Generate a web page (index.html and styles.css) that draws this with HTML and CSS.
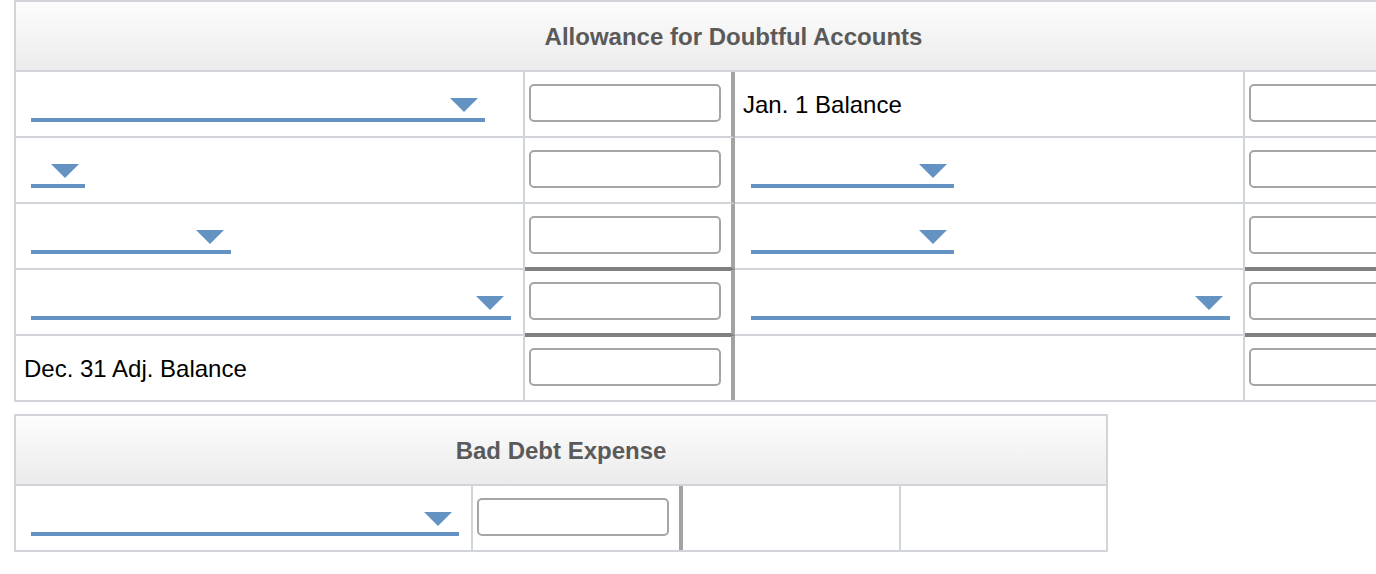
FILE: index.html
```html
<!DOCTYPE html>
<html lang="en">
<head>
<meta charset="utf-8">
<title>T-Accounts</title>
<link rel="stylesheet" href="styles.css">
</head>
<body>
<div class="acct acct-main">
  <div class="acct-head">Allowance for Doubtful Accounts</div>
  <div class="acct-body">
    <div class="cell"><div class="dd w454"></div></div>
    <div class="cell debit"><input class="amt" type="text"></div>
    <div class="cell label">Jan. 1 Balance</div>
    <div class="cell credit"><input class="amt" type="text"></div>

    <div class="cell"><div class="dd w54"></div></div>
    <div class="cell debit"><input class="amt" type="text"></div>
    <div class="cell cr-label"><div class="dd w203"></div></div>
    <div class="cell credit"><input class="amt" type="text"></div>

    <div class="cell"><div class="dd w200"></div></div>
    <div class="cell debit rule"><input class="amt" type="text"></div>
    <div class="cell cr-label"><div class="dd w203"></div></div>
    <div class="cell credit rule"><input class="amt" type="text"></div>

    <div class="cell"><div class="dd w480"></div></div>
    <div class="cell debit rule"><input class="amt" type="text"></div>
    <div class="cell cr-label"><div class="dd w479"></div></div>
    <div class="cell credit rule"><input class="amt" type="text"></div>

    <div class="cell label last">Dec. 31 Adj. Balance</div>
    <div class="cell debit last"><input class="amt" type="text"></div>
    <div class="cell last"></div>
    <div class="cell credit last"><input class="amt" type="text"></div>
  </div>
</div>

<div class="acct acct-bad">
  <div class="acct-head">Bad Debt Expense</div>
  <div class="acct-body">
    <div class="cell last"><div class="dd w428"></div></div>
    <div class="cell debit last"><input class="amt" type="text"></div>
    <div class="cell last"></div>
    <div class="cell credit last"></div>
  </div>
</div>
</body>
</html>
```
FILE: styles.css
```css
html, body {
  margin: 0;
  overflow: hidden;
  background: #ffffff;
}

body {
  padding: 0 0 0 14px;
  font-family: "Liberation Sans", Arial, Helvetica, sans-serif;
}

.acct {
  box-sizing: border-box;
  border: 2px solid #d1d5d9;
}

.acct-main {
  width: 1439px;
}

.acct-bad {
  width: 1094px;
  margin-top: 12px;
}

.acct-head {
  box-sizing: border-box;
  height: 70px;
  padding-top: 2px;
  border-bottom: 2px solid #d1d5d9;
  background: linear-gradient(to bottom, #fdfdfd, #ebebeb);
  display: flex;
  align-items: center;
  justify-content: center;
  font-weight: bold;
  font-size: 24px;
  color: #5a5a5a;
}

.acct-body {
  display: grid;
}

.acct-main .acct-body {
  grid-template-columns: 509px 210px 510px 206px;
  grid-template-rows: repeat(4, 66px) 64px;
}

.acct-bad .acct-body {
  grid-template-columns: 457px 210px 218px 205px;
  grid-template-rows: 64px;
}

.cell {
  box-sizing: border-box;
  min-width: 0;
  display: flex;
  align-items: flex-start;
  border-right: 2px solid #d1d5d9;
  border-bottom: 2px solid #d1d5d9;
}

.cell.debit {
  border-right: 4px solid #a3a3a3;
}

.cell.credit {
  border-right: 0;
}

.cell.rule {
  border-bottom: 3px solid #808080;
  box-shadow: 0 1px 0 #808080;
}

.cell.last {
  border-bottom: 0;
}

.cell.label {
  align-items: center;
  padding-left: 8px;
  padding-top: 2px;
  font-size: 24px;
  color: #000000;
  white-space: nowrap;
}

.dd {
  box-sizing: border-box;
  margin-left: 15px;
  height: 50px;
  border-bottom: 4px solid #6392c3;
  display: flex;
  justify-content: flex-end;
  align-items: flex-end;
  padding: 0 7px 6px 0;
}

.dd::after {
  content: "";
  width: 0;
  height: 0;
  border-left: 14px solid transparent;
  border-right: 14px solid transparent;
  border-top: 14px solid #6392c3;
}

.cr-label .dd {
  margin-left: 16px;
}

.w54 { width: 54px; padding-right: 6px; }
.w200 { width: 200px; }
.w203 { width: 203px; }
.w428 { width: 428px; }
.w454 { width: 454px; }
.w479 { width: 479px; }
.w480 { width: 480px; }

.amt {
  box-sizing: border-box;
  margin: 12px 0 0 4px;
  width: 192px;
  height: 38px;
  padding: 0 6px;
  border: 2px solid #a5a5a5;
  border-radius: 5px;
  background: #ffffff;
  font-family: inherit;
  font-size: 20px;
  outline: none;
}
```
